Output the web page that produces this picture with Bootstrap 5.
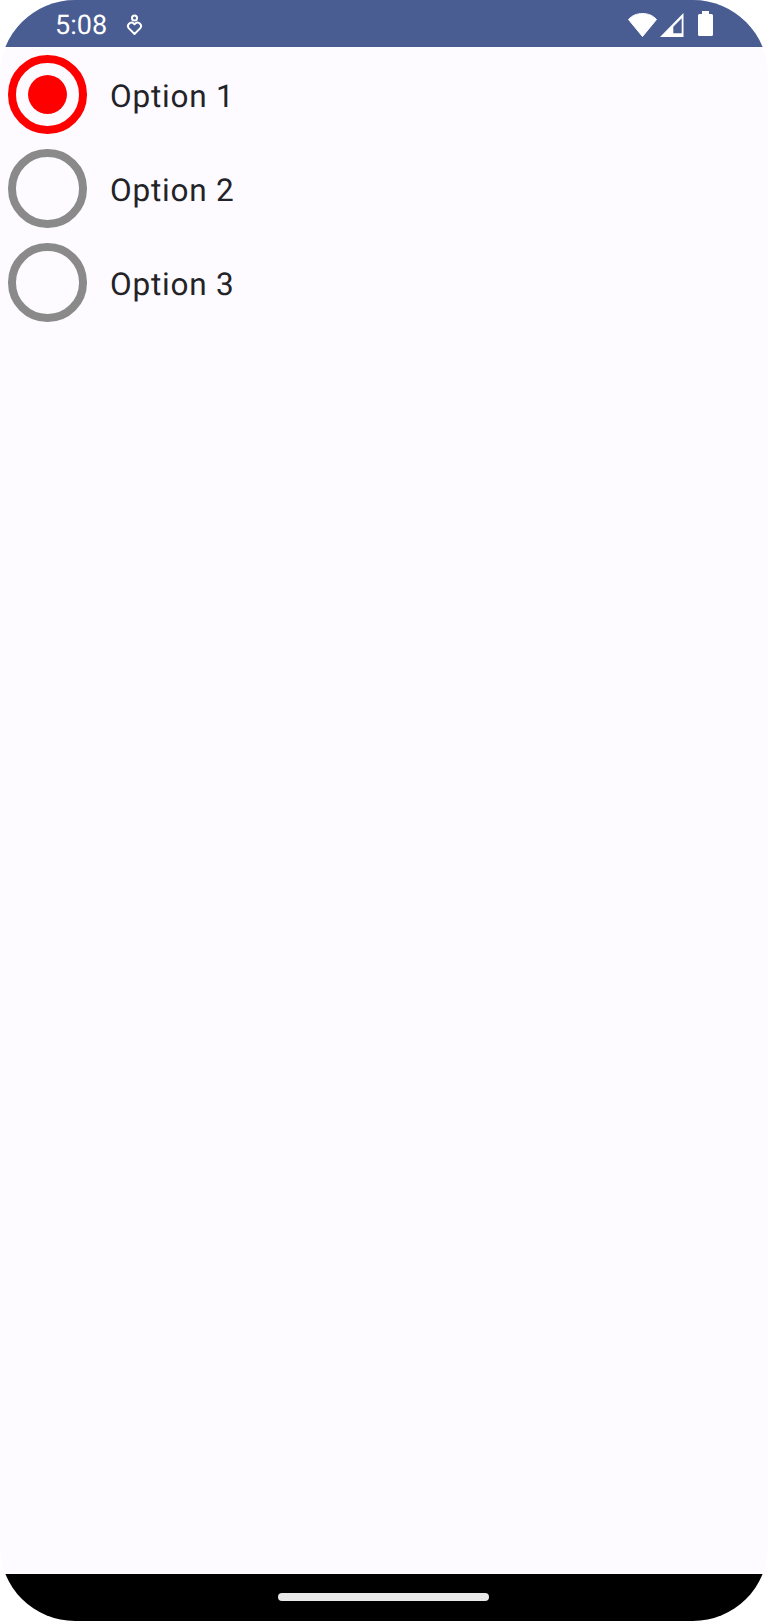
<!DOCTYPE html>
<html lang="en">
<head>
<meta charset="utf-8">
<title>Radio options</title>
<link href="https://cdn.jsdelivr.net/npm/bootstrap@5.3.0/dist/css/bootstrap.min.css" rel="stylesheet">
<style>
html, body { height: 100%; background: #fff; }
body { font-family: Roboto, "Liberation Sans", sans-serif; overflow: hidden; text-rendering: geometricPrecision; }
.phone-frame { height: 1621px; width: 768px; border-radius: 75px; overflow: hidden; background: #fdfbff; }
.status-strip { height: 47px; background: #4a5d92; color: #fff; padding: 3px 55px 0 55px; }
.clock-text { font-size: 27px; line-height: 1; width: 71px; }
.signal-icon { margin-left: 3px; }
.battery-icon { margin-left: 14px; margin-bottom: 3px; }
.option-row { height: 94px; padding-left: 8.3px; padding-top: 1px; }
.ring-input { appearance: none; -webkit-appearance: none; display: block; width: 78.5px; height: 78.5px; margin: 0; border: 8px solid #8a8a8a; border-radius: 50%; padding: 11.75px; background: transparent; }
.ring-input:checked { border-color: #f00; background: #f00 content-box; }
.option-text { margin-left: 23.2px; font-size: 31.5px; letter-spacing: .8px; color: #232327; line-height: 1; padding-top: 5px; }
.nav-strip { height: 47px; background: #000; }
.home-pill { width: 211px; height: 8px; border-radius: 4px; background: #e8e8e8; margin-top: 19px; margin-right: 1px; }
</style>
</head>
<body>
<div class="phone-frame d-flex flex-column">
  <div class="status-strip d-flex align-items-center flex-shrink-0">
    <span class="clock-text">5:08</span>
    <svg width="17" height="22" viewBox="0 0 17 22" aria-hidden="true"><circle cx="8.500" cy="4" r="2.500" fill="none" stroke="#fff" stroke-width="2"/><path d="M8.500 20 2.900 14.400a3.400 3.400 0 0 1 4.800-4.800l.8.800.8-.8a3.400 3.400 0 0 1 4.800 4.800z" fill="none" stroke="#fff" stroke-width="2" stroke-linejoin="round"/></svg>
    <div class="ms-auto d-flex align-items-center">
      <svg width="29" height="24" viewBox="0 0 29 24" aria-hidden="true"><path d="M.5 6.500C4 2.500 9 .5 14.500.5S25 2.500 28.500 6.500L14.500 23.500z" fill="#fff" stroke="#fff" stroke-width="1" stroke-linejoin="round"/></svg>
      <svg class="signal-icon" width="24" height="24" viewBox="0 0 24 24" aria-hidden="true"><path d="M0 24 23.500 0v24z" fill="#fff"/><path d="M13.300 13.700 21.700 5.300v15h-8.400z" fill="#4a5d92"/></svg>
      <svg class="battery-icon" width="15" height="25" viewBox="0 0 15 25" aria-hidden="true"><path d="M4 0h7v3h2.500A1.500 1.500 0 0 1 15 4.500v19a1.500 1.500 0 0 1-1.500 1.500h-12A1.500 1.500 0 0 1 0 23.500v-19A1.500 1.500 0 0 1 1.500 3H4z" fill="#fff"/></svg>
    </div>
  </div>
  <main class="flex-grow-1">
    <label class="option-row d-flex align-items-center">
      <input class="ring-input flex-shrink-0" type="radio" name="choice" checked>
      <span class="option-text">Option 1</span>
    </label>
    <label class="option-row d-flex align-items-center">
      <input class="ring-input flex-shrink-0" type="radio" name="choice">
      <span class="option-text">Option 2</span>
    </label>
    <label class="option-row d-flex align-items-center">
      <input class="ring-input flex-shrink-0" type="radio" name="choice">
      <span class="option-text">Option 3</span>
    </label>
  </main>
  <div class="nav-strip d-flex justify-content-center flex-shrink-0">
    <div class="home-pill"></div>
  </div>
</div>
<script src="https://cdn.jsdelivr.net/npm/bootstrap@5.3.0/dist/js/bootstrap.bundle.min.js"></script>
</body>
</html>
